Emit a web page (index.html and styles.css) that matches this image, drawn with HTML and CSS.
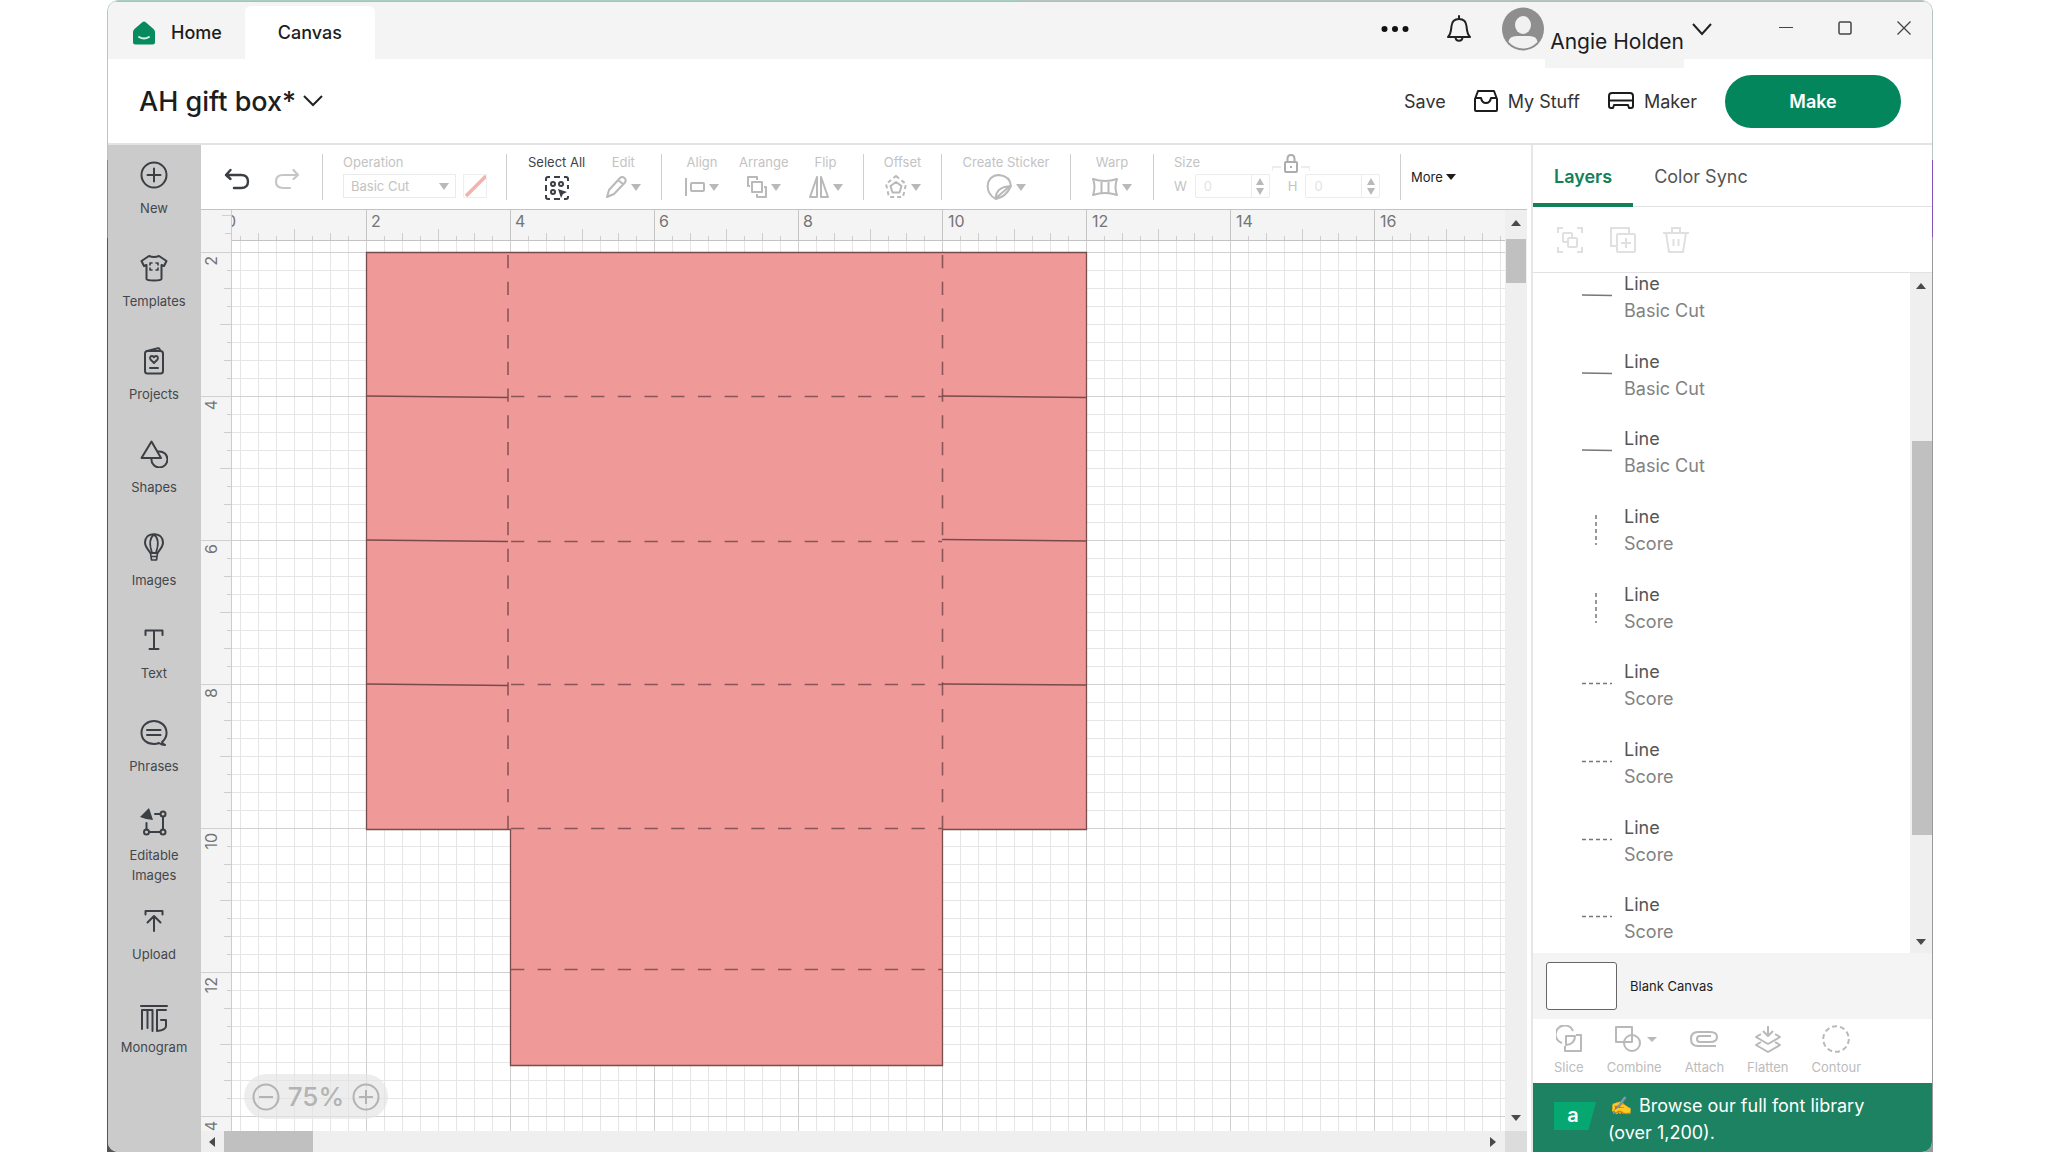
FILE: index.html
```html
<!DOCTYPE html>
<html lang="en">
<head>
<meta charset="utf-8">
<title>AH gift box</title>
<link rel="stylesheet" href="styles.css">
</head>
<body>
<div class="frame">
<div class="window">
  <header class="titlebar">
    <nav class="tabs">
      <a class="tab" href="#home">
        <svg width="22" height="24" viewBox="0 0 22 24"><path d="M11 0.500Q12 0.500 13 1.500L20.500 8Q22 9.500 22 11V21Q22 23.500 19.500 23.500H2.500Q0 23.500 0 21V11Q0 9.500 1.500 8L9 1.500Q10 0.500 11 0.500Z" fill="#068a5e"/><path d="M6 16Q11 19 16 16" fill="none" stroke="#d5f2e6" stroke-width="2" stroke-linecap="round"/></svg>
        Home
      </a>
      <a class="tab tab-active" href="#canvas">Canvas</a>
    </nav>
    <div class="account">
      <button class="plain" aria-label="More options"><svg width="28" height="8" viewBox="0 0 28 8" fill="#111"><circle cx="3.500" cy="4" r="3"/><circle cx="14" cy="4" r="3"/><circle cx="24.500" cy="4" r="3"/></svg></button>
      <button class="plain" aria-label="Notifications"><svg width="26" height="28" viewBox="0 0 26 28" fill="none" stroke="#222" stroke-width="2" stroke-linejoin="round" stroke-linecap="round"><path d="M13 1V4M2 22C5 19 5 16 5.500 11C6 6 9 4 13 4S20 6 20.500 11C21 16 21 19 24 22ZM9.500 22C9.500 27 16.500 27 16.500 22"/></svg></button>
      <button class="plain user">
        <svg width="42" height="44" viewBox="0 0 42 44"><ellipse cx="21" cy="22" rx="21" ry="21.500" fill="#8e8e8e"/><ellipse cx="21" cy="18" rx="8" ry="9" fill="#f1f1f1"/><path d="M6.500 35Q7 29 15 29H27Q35 29 35.500 35Q29 41.500 21 41.500T6.500 35Z" fill="#f1f1f1"/></svg>
        <span class="user-name">Angie Holden</span>
        <svg class="user-chevron" width="20" height="14" viewBox="0 0 20 14" fill="none" stroke="#222" stroke-width="2"><path d="M1 2L10 12L19 2"/></svg>
      </button>
    </div>
    <div class="window-buttons">
      <button class="plain" aria-label="Minimize"><svg width="14" height="14" viewBox="0 0 14 14" stroke="#444"><path d="M0 6.500H14"/></svg></button>
      <button class="plain" aria-label="Maximize"><svg width="14" height="14" viewBox="0 0 14 14" fill="none" stroke="#444" stroke-width="1.500"><rect x="1" y="1" width="12" height="12" rx="1.500"/></svg></button>
      <button class="plain" aria-label="Close"><svg width="14" height="14" viewBox="0 0 14 14" stroke="#444" stroke-width="1.300"><path d="M0.500 0.500L13.500 13.500M13.500 0.500L0.500 13.500"/></svg></button>
    </div>
  </header>

  <div class="projectbar">
    <button class="plain project-name">AH gift box*<svg width="20" height="12" viewBox="0 0 20 12" fill="none" stroke="#222" stroke-width="2"><path d="M1 1L10 10L19 1"/></svg></button>
    <div class="project-actions">
      <button class="plain">Save</button>
      <button class="plain"><svg width="24" height="22" viewBox="0 0 24 22" fill="none" stroke="#1c1c1c" stroke-width="2" stroke-linejoin="round"><path d="M1 9V20Q1 21 2 21H22Q23 21 23 20V9L20 1H4ZM1 8H7Q8 13 12 13T17 8H23"/></svg>My Stuff</button>
      <button class="plain"><svg width="26" height="20" viewBox="0 0 26 20" fill="none" stroke="#1c1c1c" stroke-width="2" stroke-linejoin="round"><path d="M1 10V5Q1 2 4 2H22Q25 2 25 5V10M1 9.500H25V15Q25 17 23 17H21L20 14H6L5 17H3Q1 17 1 15Z"/></svg>Maker</button>
      <button class="make">Make</button>
    </div>
  </div>

  <div class="main">
    <nav class="sidebar">
      <button class="plain side-item"><svg width="28" height="28" viewBox="0 0 28 28"><circle cx="14" cy="14" r="12.500"/><path d="M14 7.500V20.500M7.500 14H20.500"/></svg>New</button>
      <button class="plain side-item"><svg width="28" height="28" viewBox="0 0 28 28"><path d="M9 2Q14 4 19 2L26.500 7L24 12L21.500 11V25Q21 26.500 14 26.500T6.500 25V11L4 12L1.500 7Z"/><path d="M10 11V9H12M16 9H18V11M18 14V16H16M12 16H10V14" stroke-width="1.600"/></svg>Templates</button>
      <button class="plain side-item"><svg width="28" height="28" viewBox="0 0 28 28"><rect x="5" y="4" width="18" height="22.500" rx="2.500"/><path d="M7 4L18 1.300Q20 1 20 4M10 21H18"/><path d="M14 16L10.500 12.500Q9 9.500 12 9Q13.500 9 14 10.500Q14.500 9 16 9Q19 9.500 17.500 12.500Z" stroke-width="1.800"/></svg>Projects</button>
      <button class="plain side-item"><svg width="28" height="28" viewBox="0 0 28 28"><path d="M11.500 1.500L1.500 18H21Z"/><path d="M18.500 11.500A8 8 0 1 1 11.500 18.500"/></svg>Shapes</button>
      <button class="plain side-item"><svg width="28" height="28" viewBox="0 0 28 28"><path d="M14 1.200C8 1.200 5 5 5 9.500C5 14 9 17.500 10.500 20H17.500C19 17.500 23 14 23 9.500C23 5 20 1.200 14 1.200Z"/><path d="M12 19.500C9 11 9.500 5 14 1.500C18.500 5 19 11 16 19.500M10.500 20L11.500 27H16.500L17.500 20M11 23.500H17" stroke-width="1.700"/></svg>Images</button>
      <button class="plain side-item"><svg width="28" height="28" viewBox="0 0 28 28"><path d="M5.500 9V4.500H22.500V9M14 4.500V23M9.500 23H18.500"/></svg>Text</button>
      <button class="plain side-item"><svg width="28" height="28" viewBox="0 0 28 28"><path d="M22 23Q27 19 26.500 13C26 6 20 2 14 2S1.500 6 1.500 13.500S7 25 14 25Q17 25 19 24Q22 26 25 26Q22.500 25 22 23ZM7 11H20.500M7 16H20.500"/></svg>Phrases</button>
      <button class="plain side-item side-item-tall"><svg width="28" height="28" viewBox="0 0 28 28"><path d="M0 9L9 0L13 12L6 11Z" fill="#3b3f44" stroke="none"/><circle cx="23" cy="6" r="2.500"/><circle cx="23" cy="24" r="2.500"/><circle cx="6.500" cy="24" r="2.500"/><path d="M15 6H20.500M23 8.500V21.500M20.500 24H9M6.500 21.500V15"/></svg>Editable Images</button>
      <button class="plain side-item"><svg width="28" height="28" viewBox="0 0 28 28"><path d="M5.500 7.500V4H22.500V7.500M14 24V10M7.500 15.500L14 9L20.500 15.500"/></svg>Upload</button>
      <button class="plain side-item"><svg class="overhang" width="28" height="28" viewBox="0 0 28 28"><path d="M1 6H27M2 29V10H12.500V31M7.500 10V28M26 10H17V31Q26 30 26 26V20H21"/></svg>Monogram</button>
    </nav>

    <section class="editor">
      <div class="toolbar">
        <div class="group group-history">
          <button class="plain" aria-label="Undo"><svg width="26" height="22" viewBox="0 0 26 22" fill="none" stroke="#3b3f44" stroke-width="2.400" stroke-linecap="round" stroke-linejoin="round"><path d="M6.500 2L2 7L6.500 11M2 7H17Q24 7 24 13.500T17 20H10"/></svg></button>
          <button class="plain" aria-label="Redo"><svg width="26" height="22" viewBox="0 0 26 22" fill="none" stroke="#c6c6c6" stroke-width="2.200" stroke-linecap="round" stroke-linejoin="round"><path d="M19.500 2L24 7L19.500 11M24 7H9Q2 7 2 13.500T9 20H16"/></svg></button>
        </div>
        <div class="group group-operation">
          <label for="operation">Operation</label>
          <div class="row">
            <div class="select-wrap"><select id="operation"><option>Basic Cut</option></select><i class="caret"></i></div>
            <button class="plain swatch" aria-label="Cut colour"><svg width="24" height="24" viewBox="0 0 24 24"><path d="M2 22L22 2" stroke="#f3b3ab" stroke-width="3.500"/></svg></button>
          </div>
        </div>
        <div class="group group-edit">
          <button class="plain tool tool-on"><span>Select All</span><svg width="24" height="24" viewBox="0 0 24 24" fill="none" stroke="#3b3f44" stroke-width="2"><path d="M1 5V3Q1 1 3 1H5M9 1H15M19 1H21Q23 1 23 3V5M23 9V13M23 20V21Q23 23 21 23H19M15 23H9M5 23H3Q1 23 1 21V19M1 15V9"/><circle cx="8" cy="8" r="2"/><circle cx="16" cy="8" r="2"/><circle cx="8" cy="16" r="2"/><path d="M13 13L22 16L18 18L16 22Z" fill="#3b3f44" stroke="none"/></svg></button>
          <button class="plain tool"><span>Edit</span><span class="row"><svg width="22" height="24" viewBox="0 0 22 24"><path d="M2 22L4 15L15 3Q17 1 19.500 3Q21.500 5 20 7.500L9 19ZM13 5L18 9"/></svg><i class="caret"></i></span></button>
        </div>
        <div class="group group-align">
          <button class="plain tool"><span>Align</span><span class="row"><svg width="20" height="20" viewBox="0 0 20 20"><path d="M1 1V19"/><rect x="6" y="6" width="13" height="8" rx="1"/></svg><i class="caret"></i></span></button>
          <button class="plain tool"><span>Arrange</span><span class="row"><svg width="20" height="22" viewBox="0 0 20 22"><rect x="5" y="6" width="10" height="10"/><path d="M3 10H1V1H10V4M17 11H19V21H10V18"/></svg><i class="caret"></i></span></button>
          <button class="plain tool"><span>Flip</span><span class="row"><svg width="20" height="22" viewBox="0 0 20 22"><path d="M8 1V21H1ZM12 1V21H19Z"/></svg><i class="caret"></i></span></button>
        </div>
        <div class="group group-offset">
          <button class="plain tool"><span>Offset</span><span class="row"><svg width="22" height="24" viewBox="0 0 22 24"><path d="M11 7L16.500 11L14.500 17.500H7.500L5.500 11Z"/><path d="M11 1L21 9L18 22H4L1 9Z" stroke-dasharray="4 3"/></svg><i class="caret"></i></span></button>
        </div>
        <div class="group group-sticker">
          <button class="plain tool"><span>Create Sticker</span><span class="row"><svg width="26" height="26" viewBox="0 0 26 26"><path d="M10 25C-2 20-1 1 13 1Q24 2 25 12Q20 23 10 25ZM10 25Q9 13 25 12M10 24L24 12"/></svg><i class="caret"></i></span></button>
        </div>
        <div class="group group-warp">
          <button class="plain tool"><span>Warp</span><span class="row"><svg width="26" height="20" viewBox="0 0 26 20"><path d="M1 2Q13 6 25 2Q22 10 25 18Q13 14 1 18Q4 10 1 2ZM9.500 4V16M16.500 4V16"/></svg><i class="caret"></i></span></button>
        </div>
        <div class="group group-size">
          <div class="row size-head"><span>Size</span><svg width="38" height="20" viewBox="0 0 38 20"><path d="M0 17V13H9M29 13H38V17" stroke="#ededed"/><rect x="13" y="8" width="12" height="10" rx="1" stroke="#adadad"/><path d="M15.500 8V5Q15.500 1 19 1T22.500 5V8M19 12V14" stroke="#adadad"/></svg></div>
          <div class="row size-fields">
            <label for="w">W</label><div class="field"><input id="w" value="0"><span class="steps"><i class="caret caret-up"></i><i class="caret"></i></span></div>
            <label for="h">H</label><div class="field"><input id="h" value="0"><span class="steps"><i class="caret caret-up"></i><i class="caret"></i></span></div>
          </div>
        </div>
        <button class="plain more">More<i class="caret"></i></button>
      </div>

      <div class="workspace">
        <div class="ruler-corner"><svg width="100%" height="100%"><path d="M21 5.500H30M24 23.500H30" stroke="#d0d0d0"/></svg></div>
        <div class="ruler ruler-top">
          <svg width="100%" height="100%">
            <defs><pattern id="ticksX" x="134" y="0" width="144" height="31" patternUnits="userSpaceOnUse"><path d="M0.500 0V31" stroke="#c6c6c6"/><path d="M18.500 26V31M36.500 23V31M54.500 26V31M72.500 19V31M90.500 26V31M108.500 23V31M126.500 26V31" stroke="#cdcdcd"/></pattern></defs>
            <rect width="100%" height="100%" fill="url(#ticksX)"/>
            <text x="-6" y="17">0</text><text x="139" y="17">2</text><text x="283" y="17">4</text><text x="427" y="17">6</text><text x="571" y="17">8</text><text x="716" y="17">10</text><text x="860" y="17">12</text><text x="1004" y="17">14</text><text x="1148" y="17">16</text>
          </svg>
        </div>
        <div class="scroll scroll-v"><i class="caret caret-up"></i><span class="thumb thumb-v"></span><i class="caret caret-end"></i></div>
        <div class="ruler ruler-left">
          <svg width="100%" height="100%">
            <defs><pattern id="ticksY" x="0" y="11" width="31" height="144" patternUnits="userSpaceOnUse"><path d="M0 0.500H31" stroke="#d0d0d0"/><path d="M26 18.500H31M23 36.500H31M26 54.500H31M19 72.500H31M26 90.500H31M23 108.500H31M26 126.500H31" stroke="#cdcdcd"/></pattern></defs>
            <rect width="100%" height="100%" fill="url(#ticksY)"/>
            <g text-anchor="end"><text transform="translate(16 15) rotate(-90)">2</text><text transform="translate(16 159) rotate(-90)">4</text><text transform="translate(16 303) rotate(-90)">6</text><text transform="translate(16 447) rotate(-90)">8</text><text transform="translate(16 592) rotate(-90)">10</text><text transform="translate(16 736) rotate(-90)">12</text><text transform="translate(16 880) rotate(-90)">14</text></g>
          </svg>
        </div>
        <div class="canvas">
          <svg width="100%" height="100%">
            <defs><pattern id="grid" x="134" y="11" width="144" height="144" patternUnits="userSpaceOnUse"><path d="M18.500 0V144M36.500 0V144M54.500 0V144M72.500 0V144M90.500 0V144M108.500 0V144M126.500 0V144M0 18.500H144M0 36.500H144M0 54.500H144M0 72.500H144M0 90.500H144M0 108.500H144M0 126.500H144" stroke="#e6e6e6"/><path d="M0.500 0V144M0 0.500H144" stroke="#d0d0d0"/></pattern></defs>
            <rect width="100%" height="100%" fill="url(#grid)"/>
            <path d="M134.500 11.500H854.500V588.500H710.500V824.500H278.500V588.500H134.500Z" fill="#ef9a99" stroke="#764c4d" stroke-width="1.300"/>
            <g fill="none" stroke="#8a5556" stroke-width="1.600" stroke-dasharray="13.300 13.400"><path d="M276 14V588M710.500 14V588M279 155.500H710M279 300.500H710M279 443.500H710M279 587.500H710M279 728.500H710"/></g>
            <path d="M134 155L276 156.500M134 299L276 300.500M134 443L276 444.500M710 155L854 156.500M710 298.500L854 300M710 443L854 444" fill="none" stroke="#784a4c" stroke-width="1.500"/>
          </svg>
          <div class="zoom">
            <button class="plain" aria-label="Zoom out"><svg width="28" height="28" viewBox="0 0 28 28"><circle cx="14" cy="14" r="12.500"/><path d="M7 14H21"/></svg></button>
            <span>75%</span>
            <button class="plain" aria-label="Zoom in"><svg width="28" height="28" viewBox="0 0 28 28"><circle cx="14" cy="14" r="12.500"/><path d="M7 14H21M14 7V21"/></svg></button>
          </div>
        </div>
        <div class="scroll scroll-h"><i class="caret caret-left"></i><span class="thumb thumb-h"></span><i class="caret caret-right caret-end"></i></div>
        <div class="scroll-corner"></div>
      </div>
    </section>

    <aside class="panel">
      <nav class="panel-tabs"><a class="panel-tab panel-tab-active" href="#layers">Layers</a><a class="panel-tab" href="#color-sync">Color Sync</a></nav>
      <div class="layer-tools">
        <button class="plain" aria-label="Group"><svg width="26" height="26" viewBox="0 0 26 26"><path d="M1 6V1H6M20 1H25V6M25 20V25H20M6 25H1V20"/><path d="M10 15H7Q6 15 6 14V7Q6 6 7 6H14Q15 6 15 7V10"/><rect x="11" y="11" width="9" height="9" rx="1"/></svg></button>
        <button class="plain" aria-label="Duplicate"><svg width="26" height="26" viewBox="0 0 26 26"><rect x="7" y="7" width="18" height="18" rx="1"/><path d="M7 19H1V1H19V7M16 11V21M11 16H21"/></svg></button>
        <button class="plain" aria-label="Delete"><svg width="26" height="26" viewBox="0 0 26 26"><path d="M0 6H26M9 6V1H17V6M3 6L6 25H20L23 6M10.500 12V19M15.500 12V19"/></svg></button>
      </div>
      <div class="layers">
        <ul class="layer-list">
          <li class="layer"><svg width="30" height="30" viewBox="0 0 30 30"><path d="M0 13L30 13.500"/></svg><p><b>Line</b><br>Basic Cut</p></li>
          <li class="layer"><svg width="30" height="30" viewBox="0 0 30 30"><path d="M0 13L30 13.500"/></svg><p><b>Line</b><br>Basic Cut</p></li>
          <li class="layer"><svg width="30" height="30" viewBox="0 0 30 30"><path d="M0 13L30 13.500"/></svg><p><b>Line</b><br>Basic Cut</p></li>
          <li class="layer"><svg width="30" height="30" viewBox="0 0 30 30"><path d="M14 0V30" stroke-dasharray="4 3"/></svg><p><b>Line</b><br>Score</p></li>
          <li class="layer"><svg width="30" height="30" viewBox="0 0 30 30"><path d="M14 0V30" stroke-dasharray="4 3"/></svg><p><b>Line</b><br>Score</p></li>
          <li class="layer"><svg width="30" height="30" viewBox="0 0 30 30"><path d="M0 13.500H30" stroke-dasharray="4 3"/></svg><p><b>Line</b><br>Score</p></li>
          <li class="layer"><svg width="30" height="30" viewBox="0 0 30 30"><path d="M0 13.500H30" stroke-dasharray="4 3"/></svg><p><b>Line</b><br>Score</p></li>
          <li class="layer"><svg width="30" height="30" viewBox="0 0 30 30"><path d="M0 13.500H30" stroke-dasharray="4 3"/></svg><p><b>Line</b><br>Score</p></li>
          <li class="layer"><svg width="30" height="30" viewBox="0 0 30 30"><path d="M0 13.500H30" stroke-dasharray="4 3"/></svg><p><b>Line</b><br>Score</p></li>
        </ul>
        <div class="scroll scroll-v scroll-layers"><i class="caret caret-up"></i><span class="thumb thumb-layers"></span><i class="caret caret-end"></i></div>
      </div>
      <div class="blank"><span class="blank-box"></span>Blank Canvas</div>
      <div class="actions">
        <button class="plain tool"><svg width="26" height="26" viewBox="0 0 26 26"><path d="M17 5A9 9 0 1 0 6 17M9 20V25H25V9H20"/><path d="M10 10H19Q19 18 10 19Z"/></svg><span>Slice</span></button>
        <button class="plain tool"><span class="row"><svg width="26" height="26" viewBox="0 0 26 26"><rect x="1" y="1" width="16" height="15"/><circle cx="17" cy="17" r="8"/></svg><i class="caret caret-wide"></i></span><span>Combine</span></button>
        <button class="plain tool"><svg width="28" height="26" viewBox="0 0 28 26"><path d="M21 10H10Q7 10 7 13T10 16H20Q27 16 27 11T20 6H8Q1 6 1 13T8 20H26"/></svg><span>Attach</span></button>
        <button class="plain tool"><svg width="26" height="28" viewBox="0 0 26 28"><path d="M13 1V10M8 6L13 11L18 6M6 9L1 12L13 19L25 12L20 9M6 17L1 20L13 27L25 20L20 17"/></svg><span>Flatten</span></button>
        <button class="plain tool"><svg width="28" height="28" viewBox="0 0 28 28"><circle cx="14" cy="14" r="12.800" stroke-dasharray="5 3"/></svg><span>Contour</span></button>
      </div>
      <a class="banner" href="#fonts"><span class="logo">a</span><span class="banner-text"><span class="emoji">✍️</span> Browse our full font library (over 1,200).</span></a>
    </aside>
  </div>
</div>
</div>
</body>
</html>
```
FILE: styles.css
```css
* { box-sizing: border-box; }
body { margin: 0; background: #fff; font-family: Inter, "Liberation Sans", sans-serif; font-size: 18px; color: #1d1d1d; }
svg { display: block; flex: none; }
a { color: inherit; text-decoration: none; }
.plain { border: 0; padding: 0; background: none; color: inherit; font: inherit; display: flex; align-items: center; }
.row { display: flex; align-items: center; }

.frame {
  height: 100vh; margin: 0 115px 0 107px; padding: 1px 1px 0;
  background:
    linear-gradient(#a9cfc4 0 160px, #4aa79f 160px 238px, #555 238px) left / 50% 100% no-repeat,
    linear-gradient(#b5c5c0 0 160px, #8456b8 160px 237px, #999 237px) right / 50% 100% no-repeat;
  border-radius: 12px 12px 0 0;
}
.window { height: 100%; display: flex; flex-direction: column; background: #fff; border-radius: 10px; overflow: hidden; }

.titlebar { height: 58px; flex: none; display: flex; align-items: flex-start; background: #f4f4f4; border-top: 1px solid #b9b9b9; }
.tabs { display: flex; font-weight: 500; align-self: flex-end; }
.tab { height: 53px; display: flex; align-items: center; gap: 16px; padding: 0 23px 0 25px; }
.tab-active { background: #fff; border-radius: 6px 6px 0 0; padding: 0 33px; }
.account { display: flex; gap: 37px; margin-left: auto; height: 53px; align-items: center; }
.user { align-self: stretch; gap: 1px; margin-left: -7px; }
.user-name { align-self: flex-start; margin-top: 23px; height: 43px; line-height: 34px; padding-left: 5px; font-size: 21px; background: #f4f4f4; white-space: nowrap; }
.user-chevron { margin-left: 7px; }
.window-buttons { display: flex; gap: 45px; height: 52px; margin: 0 21px 0 67px; }

.projectbar { height: 84px; flex: none; display: flex; align-items: center; justify-content: space-between; padding: 0 31px; }
.project-name { gap: 7px; font-size: 27px; font-weight: 500; }
.project-actions { display: flex; align-items: center; gap: 28px; color: #333; }
.project-actions .plain { gap: 10px; }
.make { width: 176px; height: 53px; border: 0; border-radius: 27px; background: #04865d; color: #fff; font: 600 18px Inter, sans-serif; }

.main { flex: 1; min-height: 0; display: flex; border-top: 2px solid #e3e3e3; }
.sidebar { width: 93px; flex: none; background: #cbcbcb; padding: 1px 1px 0 0; display: flex; flex-direction: column; }
.side-item { height: 93px; flex: none; flex-direction: column; gap: 9px; padding-top: 15px; font-size: 13px; line-height: 20px; color: #43474c; }
.side-item-tall { height: 95px; padding: 11px 16px 0; }
.side-item svg { fill: none; stroke: #3b3f44; stroke-width: 2; stroke-linejoin: round; stroke-linecap: round; }
.side-item .overhang { overflow: visible; }

.editor { flex: 1; min-width: 0; display: flex; flex-direction: column; }
.toolbar { height: 64px; flex: none; display: flex; align-items: center; font-size: 13px; color: #c3c3c3; }
.group { height: 46px; display: flex; flex: none; border-right: 1px solid #cfcfcf; }
.tool { flex-direction: column; justify-content: flex-start; white-space: nowrap; line-height: 16px; }
.tool svg { fill: none; stroke: #b9b9b9; stroke-width: 2; stroke-linejoin: round; }
.tool > .row, .toolbar .tool > svg { height: 28px; margin-top: 4px; gap: 4px; }
.tool-on { color: #3f4347; }
.toolbar .tool-on svg { stroke: #3b3f44; }
.caret { border: 5px solid transparent; border-top: 7px solid #b9b9b9; border-bottom: 0; }
.caret-up { transform: rotate(180deg); }
.caret-left { transform: rotate(90deg); }
.caret-right { transform: rotate(-90deg); }
.caret-wide { border-top-width: 5px; }
.group-history { width: 122px; gap: 24px; padding: 4px 0 0 23px; }
.group-operation { width: 184px; padding-left: 20px; flex-direction: column; gap: 4px; line-height: 16px; }
.group-operation .row { gap: 7px; }
.select-wrap { width: 113px; height: 24px; border: 1px solid #ebebeb; display: flex; align-items: center; padding-right: 6px; }
.select-wrap select { flex: 1; appearance: none; border: 0; background: none; padding: 0 0 0 7px; font: 13px Inter, sans-serif; color: #c3c3c3; }
.swatch { width: 24px; height: 24px; border: 1px solid #efefef; overflow: hidden; }
.group-edit { width: 155px; padding-left: 21px; gap: 20px; }
.group-align { width: 202px; padding-left: 23px; gap: 20px; }
.group-offset { width: 78px; justify-content: center; }
.group-sticker { width: 129px; justify-content: center; }
.group-warp { width: 83px; justify-content: center; }
.group-size { width: 247px; padding-left: 20px; flex-direction: column; }
.size-head { height: 20px; gap: 72px; line-height: 16px; align-items: flex-start; }
.size-head svg { fill: none; stroke-width: 2; }
.size-fields { gap: 8px; }
.field { width: 75px; height: 24px; border: 1px solid #ececec; border-radius: 2px; display: flex; margin-right: 10px; }
.field input { width: 56px; min-width: 0; border: 0; border-right: 1px solid #ececec; background: none; padding: 0 8px; font: 13px Inter, sans-serif; color: #e3e3e3; }
.steps { flex: 1; display: flex; flex-direction: column; align-items: center; justify-content: center; gap: 3px; }
.steps .caret { border-width: 7px 4px 0; }
.more { color: #1d1d1d; gap: 3px; padding-left: 10px; font-size: 13px; }
.more .caret { border-top: 6px solid #1d1d1d; }

.workspace { flex: 1; min-height: 0; display: grid; grid-template: 31px 1fr 21px / 31px 1fr 22px; margin-right: 4px; border-top: 1px solid #c3c3c3; }
.workspace > div { min-width: 0; min-height: 0; overflow: hidden; }
.ruler, .ruler-corner { background: #f4f4f4; }
.ruler text { font-size: 16px; fill: #757575; }
.ruler-top { border-bottom: 1px solid #c3c3c3; }
.ruler-left, .ruler-corner { border-right: 1px solid #cdcdcd; }
.canvas { position: relative; background: #fff; }
.zoom { position: absolute; left: 12px; bottom: 12px; width: 144px; height: 45px; border-radius: 23px; background: rgba(228, 228, 228, .65); display: flex; align-items: center; justify-content: space-between; padding: 0 8px; font-size: 26px; font-weight: 500; color: #b3b3b3; }
.zoom svg { fill: none; stroke: #b3b3b3; stroke-width: 2; }
.scroll { background: #efefef; display: flex; align-items: center; }
.scroll .caret { border-top: 6px solid #4a4a4a; flex: none; }
.scroll .caret-end { margin-top: auto; }
.scroll-v { flex-direction: column; padding: 10px 0; grid-row: 1 / 3; grid-column: 3; }
.scroll-h { grid-column: 1 / 3; padding: 0 7px 0 6px; }
.scroll-h .caret-end { margin: 0 0 0 auto; }
.thumb { background: #c0c0c0; flex: none; }
.thumb-v { width: 20px; height: 44px; margin-top: 13px; }
.thumb-h { width: 89px; height: 21px; margin-left: 7px; }
.scroll-corner { background: #dcdcdc; }

.panel { width: 401px; flex: none; display: flex; flex-direction: column; border-left: 2px solid #e6e6e6; }
.panel-tabs { height: 62px; flex: none; display: flex; border-bottom: 1px solid #e2e2e2; color: #555; }
.panel-tab { padding: 0 21px; line-height: 63px; height: 62px; }
.panel-tab-active { color: #128158; font-weight: 600; border-bottom: 4px solid #128158; }
.layer-tools { height: 66px; flex: none; display: flex; align-items: center; gap: 27px; padding-left: 24px; border-bottom: 1px solid #e2e2e2; }
.layer-tools svg { fill: none; stroke: #e0e0e0; stroke-width: 2; }
.layers { flex: 1; min-height: 0; display: flex; justify-content: space-between; overflow: hidden; }
.layer-list { list-style: none; margin: -15px 0 -4px; padding: 0 0 0 49px; display: flex; flex-direction: column; }
.layer { flex: 1; display: flex; align-items: center; gap: 12px; line-height: 27px; color: #828282; }
.layer p { margin: 0; }
.layer b { font-weight: 400; color: #555; }
.layer svg { stroke: #777; stroke-width: 1.500; }
.scroll-layers { width: 22px; padding-bottom: 8px; }
.thumb-layers { width: 20px; height: 394px; margin: 152px 0 0 1px; }
.blank { height: 66px; flex: none; display: flex; align-items: center; gap: 13px; padding-left: 13px; background: #f4f4f4; font-size: 13px; }
.blank-box { width: 71px; height: 48px; background: #fff; border: 1px solid #666; border-radius: 3px; }
.actions { height: 64px; flex: none; display: flex; gap: 23px; padding: 6px 0 0 21px; font-size: 13px; color: #bcbcbc; }
.actions .tool > svg, .actions .tool > .row { height: 28px; margin: 0 0 6px; gap: 6px; }
.actions .tool > .row { padding-left: 4px; }
.banner { height: 69px; flex: none; display: flex; background: #1c8261; color: #fff; padding: 9px 0 0 21px; line-height: 27px; gap: 12px; }
.logo { width: 42px; height: 28px; margin-top: 10px; padding-right: 4px; line-height: 26px; text-align: center; font-weight: 600; font-size: 20px; background: #07a772; clip-path: polygon(0 0, 100% 0, 82% 100%, 0 100%); }
.banner-text { width: 280px; }
.emoji { margin: 0 2px; }
```
